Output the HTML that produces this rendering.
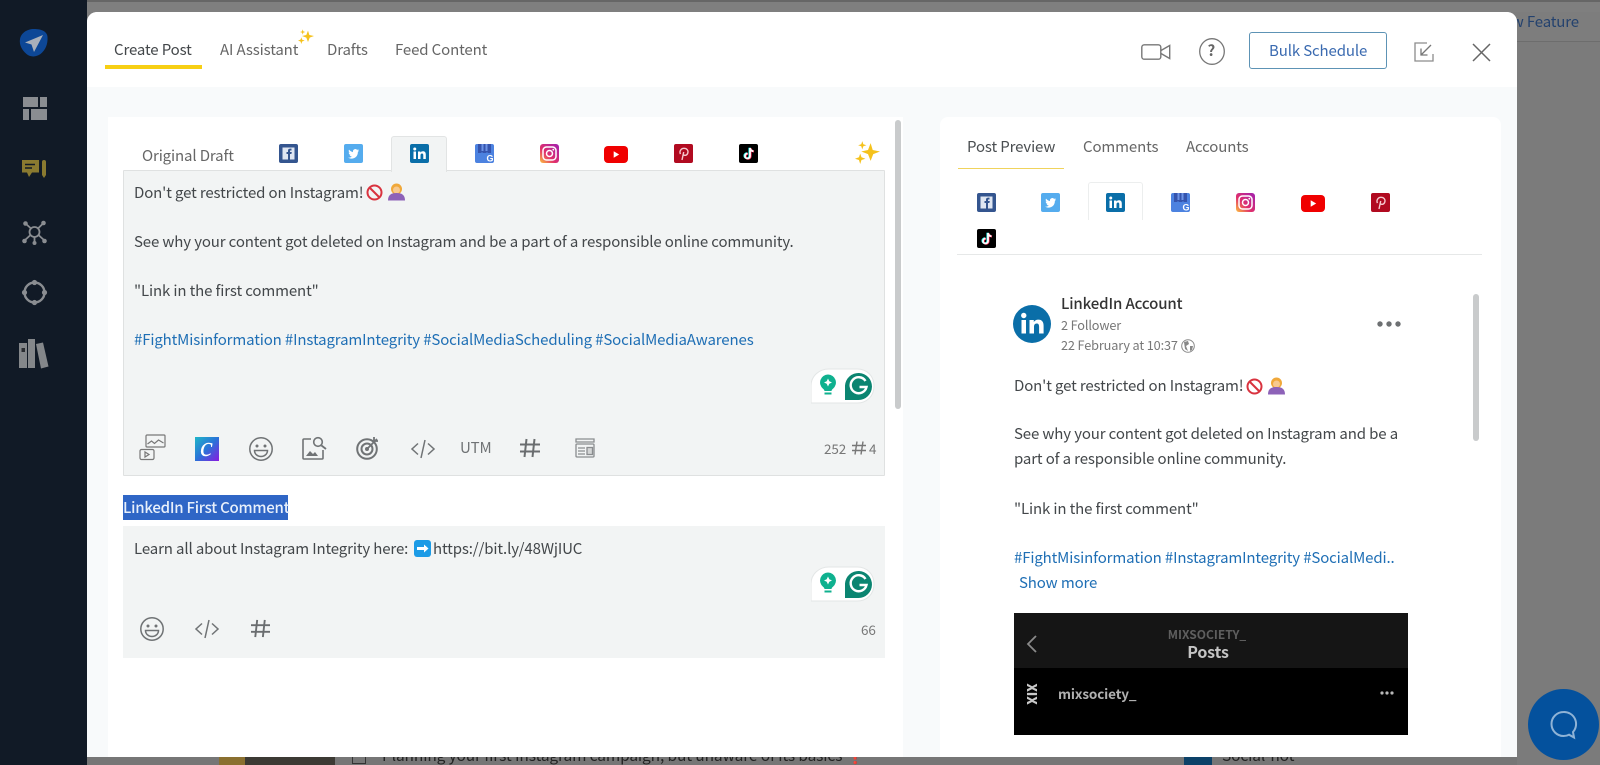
<!DOCTYPE html>
<html lang="en"><head><meta charset="utf-8"><title>Create Post</title>
<style>
*{box-sizing:border-box}
html,body{margin:0;padding:0;width:1600px;height:765px;overflow:hidden;background:#7d7d7d}
body{position:relative;font-family:"Noto Sans CJK SC","Noto Sans CJK JP","Liberation Sans",sans-serif;color:#3b3f42;filter:blur(.3px)}
.a{position:absolute}
.t{position:absolute;white-space:nowrap;font-size:15px;letter-spacing:-.13px;line-height:24px;color:#43474a}
.tab{color:#666}
.b{color:#1f6fb5}
svg{position:absolute;overflow:visible}
</style></head><body>
<svg width="0" height="0" style="position:absolute"><defs>
<symbol id="fb" viewBox="0 0 19 19"><rect width="19" height="19" rx="2" fill="#34558f"/><rect x="3.500" y="3.500" width="12" height="12" fill="#dfe6f2"/><path d="M9 15.500V10H7.500V8H9V6.600C9 5 10 4.500 12.500 4.600V6.500H11.400C11 6.500 11 6.800 11 7.200V8H12.800L12.400 10H11V15.500Z" fill="#34558f"/></symbol>
<symbol id="tw" viewBox="0 0 19 19"><rect width="19" height="19" rx="2" fill="#55acee"/><path d="M15 6.200c-.5.2-.9.3-1.400.4.5-.3.9-.8 1-1.300-.5.3-1 .5-1.500.6a2.400 2.400 0 0 0-4.100 2.200C8 8 6.200 7 5 5.600c-.6 1.100-.3 2.500.7 3.200-.4 0-.7-.1-1-.3 0 1.200.8 2.200 1.900 2.400-.3.1-.7.1-1 0 .3 1 1.200 1.600 2.200 1.700-1 .8-2.300 1.100-3.600 1 3.800 2.400 9.700.5 9.700-5.700.5-.4.800-.8 1.100-1.700z" fill="#fff"/></symbol>
<symbol id="li" viewBox="0 0 19 19"><rect width="19" height="19" rx="2" fill="#0a6ea8"/><rect x="3.500" y="7.500" width="2.500" height="7.500" fill="#fff"/><circle cx="4.750" cy="5" r="1.500" fill="#fff"/><path d="M8 7.500h2.400v1.100c.5-.8 1.300-1.300 2.500-1.300 2.100 0 2.900 1.300 2.900 3.500V15h-2.500v-3.600c0-1.100-.3-1.900-1.300-1.900s-1.500.8-1.500 1.900V15H8z" fill="#fff"/></symbol>
<symbol id="gm" viewBox="0 0 19 19"><rect width="19" height="19" rx="2" fill="#4c82e0"/><path d="M3 0h13v9h-3l-1-1-1 1H8L7 8 6 9H3z" fill="#3554ad"/><path d="M6.500 0h2v7h-2zM10.500 0h2v7h-2z" fill="#6d93e6"/><text x="11.500" y="17.500" font-size="9" font-weight="700" fill="#fff" font-family="Liberation Sans,sans-serif">G</text></symbol>
<symbol id="ig" viewBox="0 0 19 19"><linearGradient id="igg" x1="0" y1="1" x2="1" y2="0"><stop offset="0" stop-color="#fdc23d"/><stop offset=".4" stop-color="#e1306c"/><stop offset="1" stop-color="#a020b0"/></linearGradient><rect width="19" height="19" rx="3" fill="url(#igg)"/><rect x="3" y="3" width="13" height="13" rx="3.500" fill="none" stroke="#fff" stroke-width="1.500"/><circle cx="9.500" cy="9.500" r="3" fill="none" stroke="#fff" stroke-width="1.500"/><circle cx="13.300" cy="5.700" r=".9" fill="#fff"/></symbol>
<symbol id="yt" viewBox="0 0 24 17"><rect width="24" height="17" rx="4" fill="#f00000"/><path d="M9.700 5.200l5.500 3.300-5.500 3.300z" fill="#fff"/></symbol>
<symbol id="pi" viewBox="0 0 19 19"><rect width="19" height="19" rx="2" fill="#b10a20"/><path d="M8 16l1.700-8M6.500 10C5 7.500 7 4.300 10 4.300s4.500 2.300 3.800 4.700c-.6 2.200-3 3-4.500 1.700" fill="none" stroke="#f6c8ce" stroke-width="1.400"/></symbol>
<symbol id="tt" viewBox="0 0 19 19"><rect width="19" height="19" rx="2" fill="#000"/><path d="M11 4v8a2.500 2.500 0 1 1-2.500-2.500M11 4c.3 2 1.500 3 3.400 3.200" fill="none" stroke="#25f4ee" stroke-width="2" transform="translate(-.6 -.3)"/><path d="M11 4v8a2.500 2.500 0 1 1-2.500-2.500M11 4c.3 2 1.500 3 3.400 3.200" fill="none" stroke="#fe2c55" stroke-width="2" transform="translate(.6 .3)"/><path d="M11 4v8a2.500 2.500 0 1 1-2.500-2.500M11 4c.3 2 1.500 3 3.400 3.200" fill="none" stroke="#fff" stroke-width="1.800"/></symbol>
<symbol id="sp" viewBox="0 0 24 24"><path d="M15 4l2 6.500L24 12l-6.500 2.500L15 21l-2.500-6.500L6 12l6.500-1.500z" fill="#f5c21c"/><path d="M5 0l1 3 3 1-3 1-1 3-1-3-3-1 3-1z" fill="#f5c21c" transform="translate(2 2)"/><path d="M4 15l1.200 3.500L9 20l-3.800 1.200L4 25l-1.200-3.800L-1 20l3.800-1.500z" fill="#f5c21c" transform="translate(1 -1)"/></symbol>
<symbol id="em" viewBox="0 0 24 24"><circle cx="12" cy="12" r="11.200" fill="none" stroke="#707375" stroke-width="1.500"/><circle cx="8" cy="9" r="1.500" fill="#707375"/><circle cx="16" cy="9" r="1.500" fill="#707375"/><path d="M5.500 13.500h13c0 3.500-3 6-6.500 6s-6.500-2.500-6.500-6z" fill="none" stroke="#707375" stroke-width="1.500"/></symbol>
<symbol id="cd" viewBox="0 0 24 24"><path d="M7 6.500L1 12l6 5.500M17 6.500l6 5.500-6 5.500M14 3l-4 18" fill="none" stroke="#707375" stroke-width="1.500"/></symbol>
<symbol id="ha" viewBox="0 0 20 20"><path d="M6.500 1L4.500 19M14.500 1L12.500 19M0 6.500h20M0 13.500h20" fill="none" stroke="#6a6d6f" stroke-width="2"/></symbol>
<symbol id="gr" viewBox="0 0 64 36"><path d="M0 18C0 8 8 1 18 1h28c10 0 17 7 17 17s-7 17-17 17H0z" fill="#fff" stroke="#e3e6e6"/><path d="M17 6.500a8 8 0 0 1 5 14.200c-1 .8-1.300 1.300-1.500 2.300h-7c-.2-1-.5-1.500-1.500-2.300a8 8 0 0 1 5-14.200z" fill="#0fb18f"/><path d="M17 10.500l1.300 2.700 2.700 1.300-2.700 1.300L17 18.500l-1.300-2.700-2.700-1.300 2.700-1.300z" fill="#fff"/><path d="M13.500 25.500h7" stroke="#0fb18f" stroke-width="2"/><path d="M34 32V17.500a13.500 13.500 0 1 1 13.500 14.500z" fill="#0b8571"/><path d="M54.500 13a8 8 0 1 0 1 6h-7" fill="none" stroke="#fff" stroke-width="2.400"/></symbol>
<symbol id="wo" viewBox="0 0 17 18"><circle cx="8.500" cy="6" r="5.500" fill="#f0a83a"/><circle cx="8.500" cy="7" r="3.500" fill="#f7c98f"/><path d="M0 17.500c0-5.500 3-7.500 8.500-7.500S17 12 17 17.500z" fill="#8d62b8"/></symbol>
<symbol id="no" viewBox="0 0 17 17"><circle cx="8.500" cy="8.500" r="7" fill="none" stroke="#d9333f" stroke-width="2"/><path d="M3.500 3.500l10 10" stroke="#d9333f" stroke-width="2"/></symbol>
</defs></svg>

<!-- backdrop -->
<div class="a" style="left:87px;top:0;width:1513px;height:12px;background:#7f7f7f;border-top:2px solid #666"></div>
<div class="a" style="left:1517px;top:41px;width:83px;height:724px;background:#7b7b7b;border-top:1px solid #6d6d6d"></div>
<div class="t" style="right:21px;top:10px;color:#24426e;font-size:15px">View Feature</div>
<div class="a" style="left:87px;top:757px;width:1430px;height:8px;background:#767676;overflow:hidden">
 <div class="a" style="left:132px;top:0;width:116px;height:8px;background:#3c3a34"></div>
 <div class="a" style="left:132px;top:0;width:26px;height:8px;background:#8a7030"></div>
 <div class="a" style="left:265px;top:-3px;width:14px;height:10px;border:1px solid #333"></div>
 <div class="t" style="left:295px;top:-14px;color:#222;font-size:15.500px">Planning your first Instagram campaign, but unaware of its basics ❗</div>
 <div class="a" style="left:1097px;top:0;width:28px;height:8px;background:#0c4168"></div>
 <div class="t" style="left:1135px;top:-14px;color:#222;font-size:15.500px">Social-hot</div>
</div>

<!-- sidebar -->
<div class="a" style="left:0;top:0;width:87px;height:765px;background:#111a26"></div>
<svg style="left:19px;top:28px" width="30" height="30" viewBox="0 0 30 30"><path d="M15 1c7 0 13 2 13.500 8 .5 7-2 13-7 17-4 3-10 3.500-14 0C3 22 0 17 1 11 2 5 8 1 15 1z" fill="#0d4796"/><path d="M24 7L6 14.500l6.500 2L15 24z" fill="#a9b0ba"/></svg>
<svg style="left:23px;top:97px" width="24" height="24" viewBox="0 0 24 24" fill="#8a8d91"><rect width="15" height="10"/><rect x="17" width="7" height="10"/><rect y="12" width="6" height="11"/><rect x="8" y="12" width="16" height="11"/></svg>
<svg style="left:22px;top:160px" width="25" height="19" viewBox="0 0 25 19"><path d="M0 0h17v12.500h-7L7 17l-2-4.500H0z" fill="#8a7a30"/><path d="M3 4.500h10M3 8h7" stroke="#111a26" stroke-width="1.400"/><path d="M20 2a2 2 0 0 1 4 0v13l-2 3-2-3z" fill="#8a7a30"/></svg>
<svg style="left:22px;top:220px" width="25" height="25" viewBox="0 0 25 25"><g stroke="#8a8d91" stroke-width="1.800" fill="none"><circle cx="12.500" cy="12" r="5"/><path d="M3 3l6 5.500M21.500 3L16 8.500M2 21l6.500-6M23 21l-6.500-6M12.500 17v6"/></g><g fill="#8a8d91"><circle cx="3.500" cy="3.500" r="2.300"/><circle cx="21.500" cy="3" r="2.300"/><circle cx="2.500" cy="21" r="2.300"/><circle cx="22.500" cy="21" r="2.300"/><circle cx="12.500" cy="23" r="2"/></g></svg>
<svg style="left:22px;top:280px" width="25" height="25" viewBox="0 0 25 25"><circle cx="12.500" cy="12.500" r="10" fill="none" stroke="#8a8d91" stroke-width="2.400"/><g fill="#8a8d91"><circle cx="12.500" cy="2.500" r="2.600"/><circle cx="12.500" cy="22.500" r="2.600"/><circle cx="2.500" cy="12.500" r="2.600"/><circle cx="22.500" cy="12.500" r="2.600"/></g></svg>
<svg style="left:19px;top:339px" width="30" height="30" viewBox="0 0 30 30" fill="#84878a"><rect y="4" width="8" height="25"/><rect x="9" y="0" width="7" height="29"/><path d="M17 5l7-1.500 5.500 24L22 29.500z"/><rect x="2.500" y="9" width="3.500" height="4" fill="#2a2d31"/></svg>

<!-- modal -->
<div class="a" style="left:87px;top:12px;width:1430px;height:745px;background:#f8fafb;border-radius:10px 10px 0 0"></div>
<div class="a" style="left:87px;top:12px;width:1430px;height:75px;background:#fff;border-radius:10px 10px 0 0"></div>
<div class="a" style="left:108px;top:117px;width:795px;height:640px;background:#fff"></div>
<div class="a" style="left:940px;top:117px;width:561px;height:640px;background:#fff;border-radius:8px 8px 0 0"></div>

<!-- header -->
<div class="t tab" style="left:114px;top:38px;color:#43474a">Create Post</div>
<div class="a" style="left:105px;top:65px;width:97px;height:4px;background:#f7cf14"></div>
<div class="t tab" style="left:220px;top:38px">AI Assistant</div>
<svg style="left:298px;top:28px" width="16" height="16"><use href="#sp"/></svg>
<div class="t tab" style="left:327px;top:38px">Drafts</div>
<div class="t tab" style="left:395px;top:38px">Feed Content</div>

<svg style="left:1141px;top:44px" width="30" height="16" viewBox="0 0 30 16"><rect x=".8" y=".8" width="19" height="14.400" rx="2.500" fill="none" stroke="#777" stroke-width="1.400"/><path d="M20 6.500L28.700 1.500v13L20 9.500" fill="none" stroke="#777" stroke-width="1.400"/></svg>
<svg style="left:1199px;top:38px" width="26" height="27" viewBox="0 0 26 27"><ellipse cx="13" cy="13.500" rx="12.300" ry="12.800" fill="none" stroke="#777" stroke-width="1.300"/></svg>
<div class="t" style="left:1207.500px;top:39px;font-size:15px;font-weight:700;color:#666">?</div>
<div class="a" style="left:1249px;top:32px;width:138px;height:37px;border:1px solid #5d93b5;border-radius:3px;background:#fff"></div>
<div class="t" style="left:1269px;top:39px;color:#3a6ab0;font-size:15px">Bulk Schedule</div>
<svg style="left:1414px;top:42px" width="20" height="20" viewBox="0 0 20 20"><path d="M13 1H1v18h18V12" fill="none" stroke="#8c8c8c" stroke-width="1.300"/><path d="M17 3L7.500 12.500M7 6.500V13h6.500" fill="none" stroke="#777" stroke-width="1.300"/></svg>
<svg style="left:1472px;top:43px" width="19" height="19" viewBox="0 0 19 19"><path d="M1 1l17 17M18 1L1 18" stroke="#666" stroke-width="1.500"/></svg>

<!-- left tabs -->
<div class="t tab" style="left:142px;top:144px">Original Draft</div>
<div class="a" style="left:391px;top:136px;width:56px;height:36px;background:#f2f4f4;border:1px solid #e2e4e4;border-bottom:0;border-radius:3px 3px 0 0;z-index:2"></div>
<svg style="left:279px;top:144px" width="19" height="19"><use href="#fb"/></svg>
<svg style="left:344px;top:144px" width="19" height="19"><use href="#tw"/></svg>
<svg style="left:410px;top:144px;z-index:3" width="19" height="19"><use href="#li"/></svg>
<svg style="left:475px;top:144px" width="19" height="19"><use href="#gm"/></svg>
<svg style="left:540px;top:144px" width="19" height="19"><use href="#ig"/></svg>
<svg style="left:604px;top:146px" width="24" height="17"><use href="#yt"/></svg>
<svg style="left:674px;top:144px" width="19" height="19"><use href="#pi"/></svg>
<svg style="left:739px;top:144px" width="19" height="19"><use href="#tt"/></svg>
<svg style="left:855px;top:139px" width="25" height="25"><use href="#sp"/></svg>

<!-- scrollbars -->
<div class="a" style="left:895px;top:120px;width:6px;height:289px;background:#c9cbcc;border-radius:3px"></div>
<div class="a" style="left:1473px;top:294px;width:6px;height:147px;background:#c9cbcc;border-radius:3px"></div>

<!-- editor -->
<div class="a" style="left:123px;top:170px;width:762px;height:306px;background:#f2f4f4;border:1px solid #dfe1e1;border-radius:1px"></div>
<div class="t" style="left:134px;top:181px">Don't get restricted on Instagram!</div>
<svg style="left:366px;top:184px" width="17" height="17"><use href="#no"/></svg>
<svg style="left:388px;top:183px" width="17" height="18"><use href="#wo"/></svg>
<div class="t" style="left:134px;top:230px">See why your content got deleted on Instagram and be a part of a responsible online community.</div>
<div class="t" style="left:134px;top:279px">"Link in the first comment"</div>
<div class="t b" style="left:134px;top:328px">#FightMisinformation #InstagramIntegrity #SocialMediaScheduling #SocialMediaAwarenes</div>
<svg style="left:811px;top:368px" width="64" height="36"><use href="#gr"/></svg>

<!-- toolbar -->
<svg style="left:139px;top:434px" width="27" height="27" viewBox="0 0 27 27"><g fill="none" stroke="#777" stroke-width="1.200"><rect x="7" y="1" width="19" height="12" rx="1"/><path d="M8.500 10l4-3 3 2.500 4-3.500 5 3"/><rect x="1" y="15.500" width="14" height="10" rx="1.500"/><path d="M6 18v5l4-2.500z"/></g></svg>
<div class="a" style="left:195px;top:437px;width:24px;height:24px;background:linear-gradient(135deg,#1fb6c8 0%,#2a72d8 50%,#8a1ae0 100%)"></div>
<div class="t" style="left:200px;top:435px;color:#fff;font-family:'Liberation Serif',serif;font-style:italic;font-size:29px;line-height:24px">c</div>
<svg style="left:249px;top:437px" width="24" height="24"><use href="#em"/></svg>
<svg style="left:302px;top:436px" width="25" height="24" viewBox="0 0 25 24"><path d="M9 3H2a1 1 0 0 0-1 1v18a1 1 0 0 0 1 1h18a1 1 0 0 0 1-1v-8" fill="none" stroke="#707375" stroke-width="1.600"/><circle cx="16" cy="6" r="4.300" fill="none" stroke="#707375" stroke-width="1.600"/><path d="M19.500 9.500l4.500 3.500" stroke="#707375" stroke-width="1.800"/><path d="M4 20l4-5 3 3 2-2 3 4z" fill="#707375"/></svg>
<svg style="left:356px;top:436px" width="24" height="24" viewBox="0 0 24 24"><g fill="none" stroke="#707375" stroke-width="2"><circle cx="11" cy="13" r="9.800"/><circle cx="11" cy="13" r="5.500"/></g><circle cx="11" cy="13" r="2" fill="#707375"/><path d="M11 13L21 3M18 1v4h4" fill="none" stroke="#707375" stroke-width="1.800"/></svg>
<svg style="left:411px;top:437px" width="24" height="24"><use href="#cd"/></svg>
<div class="t" style="left:460px;top:436px;font-size:15px;color:#707375">UTM</div>
<svg style="left:520px;top:438px" width="20" height="20"><use href="#ha"/></svg>
<svg style="left:575px;top:438px" width="20" height="20" viewBox="0 0 20 20"><g fill="none" stroke="#8a8d8f" stroke-width="1.300"><path d="M1 1h18v3H1z"/><rect x="1" y="6" width="18" height="13" rx="1"/><path d="M3 10h7M3 13h7M3 16h7"/><rect x="12" y="9.500" width="5.500" height="7" fill="#8a8d8f" fill-opacity=".3"/></g></svg>
<div class="t" style="left:824px;top:436px;font-size:13.500px;color:#777">252</div>
<svg style="left:852px;top:441px" width="14" height="14"><path d="M5 0.500L3 13.500M11 0.500L9 13.500M0 4.500h14M0 9.500h14" fill="none" stroke="#777" stroke-width="1.400"/></svg>
<div class="t" style="left:869px;top:436px;font-size:13.500px;color:#777">4</div>

<!-- first comment -->
<div class="a" style="left:123px;top:495px;width:165px;height:25px;background:#2f66c6"></div>
<div class="t" style="left:123px;top:495px;color:#e8f0fb;line-height:25px;font-weight:500;letter-spacing:-.24px">LinkedIn First Comment</div>
<div class="a" style="left:123px;top:526px;width:762px;height:132px;background:#f2f4f4"></div>
<div class="t" style="left:134px;top:537px">Learn all about Instagram Integrity here:</div>
<svg style="left:414px;top:540px" width="17" height="17" viewBox="0 0 17 17"><rect width="17" height="17" rx="3" fill="#1c9be6"/><path d="M3 7h7V4.500L14.500 8.500 10 12.500V10H3z" fill="#fff"/></svg>
<div class="t" style="left:433px;top:537px">https://bit.ly/48WjIUC</div>
<svg style="left:811px;top:566px" width="64" height="36"><use href="#gr"/></svg>
<svg style="left:140px;top:617px" width="24" height="24"><use href="#em"/></svg>
<svg style="left:195px;top:617px" width="24" height="24"><use href="#cd"/></svg>
<svg style="left:251px;top:619px" width="19" height="19"><use href="#ha"/></svg>
<div class="t" style="left:861px;top:617px;font-size:13.500px;color:#777">66</div>

<!-- right -->
<div class="t tab" style="left:967px;top:135px;color:#4a4e51">Post Preview</div>
<div class="a" style="left:958px;top:168px;width:106px;height:1px;background:#f0d35c"></div>
<div class="t tab" style="left:1083px;top:135px">Comments</div>
<div class="t tab" style="left:1186px;top:135px">Accounts</div>
<div class="a" style="left:1088px;top:182px;width:55px;height:38px;border:1px solid #eceeee;border-bottom:0;border-radius:3px 3px 0 0;background:#fff"></div>
<svg style="left:977px;top:193px" width="19" height="19"><use href="#fb"/></svg>
<svg style="left:1041px;top:193px" width="19" height="19"><use href="#tw"/></svg>
<svg style="left:1106px;top:193px" width="19" height="19"><use href="#li"/></svg>
<svg style="left:1171px;top:193px" width="19" height="19"><use href="#gm"/></svg>
<svg style="left:1236px;top:193px" width="19" height="19"><use href="#ig"/></svg>
<svg style="left:1301px;top:195px" width="24" height="17"><use href="#yt"/></svg>
<svg style="left:1371px;top:193px" width="19" height="19"><use href="#pi"/></svg>
<svg style="left:977px;top:229px" width="19" height="19"><use href="#tt"/></svg>
<div class="a" style="left:957px;top:254px;width:525px;height:1px;background:#e6e8e8"></div>

<svg style="left:1013px;top:305px" width="38" height="38" viewBox="0 0 38 38"><circle cx="19" cy="19" r="19" fill="#0a6ea8"/><rect x="8.500" y="15" width="4.500" height="13.500" fill="#fff"/><circle cx="10.750" cy="10.500" r="2.700" fill="#fff"/><path d="M16.500 15h4.300v2c1-1.500 2.500-2.400 4.500-2.400 3.800 0 5.300 2.400 5.300 6.300v7.600h-4.500v-6.700c0-2-.6-3.300-2.400-3.300s-2.700 1.400-2.700 3.300v6.700h-4.500z" fill="#fff"/></svg>
<div class="t" style="left:1061px;top:292px;font-weight:500;color:#333">LinkedIn Account</div>
<div class="t" style="left:1061px;top:313px;font-size:12.700px;color:#777">2 Follower</div>
<div class="t" style="left:1061px;top:333px;font-size:12.700px;color:#777">22 February at 10:37</div>
<svg style="left:1181px;top:339px" width="14" height="14" viewBox="0 0 14 14"><circle cx="7" cy="7" r="6.300" fill="none" stroke="#888" stroke-width="1"/><path d="M3 3l4-1 1 3-3 2 2 5-3-2zM9 7l3 0-1 4-2 1z" fill="#888"/></svg>
<svg style="left:1377px;top:321px" width="24" height="6"><g fill="#6d7072"><circle cx="3" cy="3" r="2.700"/><circle cx="12" cy="3" r="2.700"/><circle cx="21" cy="3" r="2.700"/></g></svg>

<div class="t" style="left:1014px;top:374px">Don't get restricted on Instagram!</div>
<svg style="left:1246px;top:378px" width="17" height="17"><use href="#no"/></svg>
<svg style="left:1268px;top:377px" width="17" height="18"><use href="#wo"/></svg>
<div class="t" style="left:1014px;top:422px">See why your content got deleted on Instagram and be a</div>
<div class="t" style="left:1014px;top:447px">part of a responsible online community.</div>
<div class="t" style="left:1014px;top:497px">"Link in the first comment"</div>
<div class="t b" style="left:1014px;top:546px">#FightMisinformation #InstagramIntegrity #SocialMedi..</div>
<div class="t b" style="left:1019px;top:571px">Show more</div>

<!-- post image -->
<div class="a" style="left:1014px;top:613px;width:394px;height:122px;background:#000;overflow:hidden">
 <div class="a" style="left:0;top:0;width:394px;height:55px;background:#151515"></div>
 <svg style="left:12px;top:22px" width="12" height="18"><path d="M10 1L2 9l8 8" fill="none" stroke="#8a8a8a" stroke-width="1.800"/></svg>
 <div class="t" style="left:0;width:386px;text-align:center;top:12px;font-size:12px;line-height:20px;color:#5e5e5e;font-weight:700;letter-spacing:0">MIXSOCIETY_</div>
 <div class="t" style="left:0;width:388px;text-align:center;top:26px;font-size:16px;line-height:24px;color:#c4c4c4;font-weight:700">Posts</div>
 <div class="t" style="left:4px;top:71px;width:28px;text-align:center;transform:rotate(90deg);font-size:13px;line-height:20px;color:#c8c8c8;font-weight:900">XIX</div>
 <div class="t" style="left:44px;top:68px;font-size:13.500px;line-height:24px;color:#b0b0b0;font-weight:700">mixsociety_</div>
 <svg style="left:366px;top:78px" width="14" height="4"><g fill="#b8b8b8"><circle cx="2" cy="2" r="1.600"/><circle cx="7" cy="2" r="1.600"/><circle cx="12" cy="2" r="1.600"/></g></svg>
</div>

<!-- chat -->
<div class="a" style="left:1528px;top:689px;width:71px;height:71px;border-radius:50%;background:#04519d"></div>
<svg style="left:1549px;top:710px" width="30" height="30" viewBox="0 0 30 30"><path d="M14.500 2a12 12 0 1 0 0 24c2 0 4-.5 5.500-1.300l5 2.800-1-5.500A12 12 0 0 0 14.500 2z" fill="none" stroke="#8fb3d6" stroke-width="2"/></svg>
</body></html>
